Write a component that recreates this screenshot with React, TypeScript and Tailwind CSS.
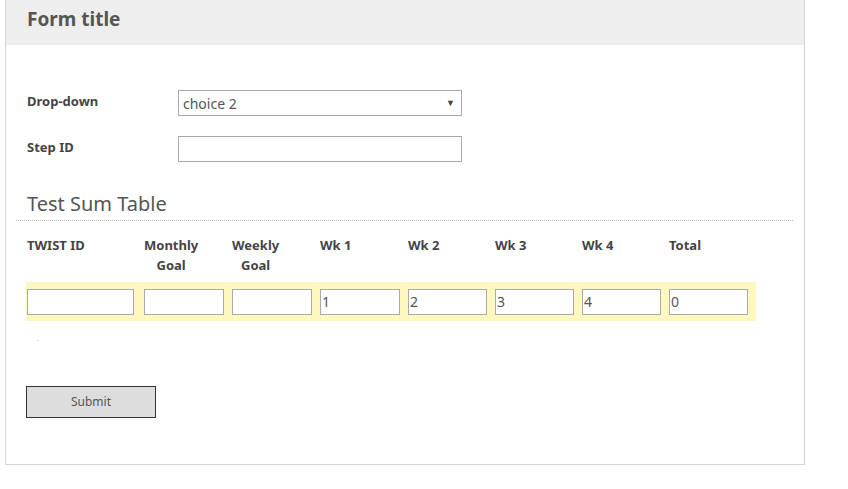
export default function App() {
  const cols = [
    { h: ["TWIST ID"], w: "w-[117px]", iw: "w-[107px]", v: "" },
    { h: ["Monthly", "Goal"], w: "w-[88px]", iw: "w-[80px]", v: "" },
    { h: ["Weekly", "Goal"], w: "w-[88px]", iw: "w-[80px]", v: "" },
    { h: ["Wk 1"], w: "w-[88px]", iw: "w-[80px]", v: "1" },
    { h: ["Wk 2"], w: "w-[87px]", iw: "w-[79px]", v: "2" },
    { h: ["Wk 3"], w: "w-[87px]", iw: "w-[79px]", v: "3" },
    { h: ["Wk 4"], w: "w-[87px]", iw: "w-[79px]", v: "4" },
    { h: ["Total"], w: "w-[86px]", iw: "w-[79px]", v: "0" },
  ];
  return (
    <div className="w-[848px] h-[489px] bg-white font-['Liberation_Sans',Arial,sans-serif] text-[#555]">
      <div className="ml-[5px] w-[800px] h-[465px] border border-t-0 border-[#d4d4d4] flex flex-col">
        <div className="h-[45px] bg-[#eeeeee] pl-[21px] pt-[5px] text-[19px] font-bold text-[#555]">Form title</div>
        <div className="pl-[21px] pt-[45px] flex items-start">
          <div className="w-[151px] text-[13px] font-bold text-[#444] pt-[2px]">Drop-down</div>
          <div className="w-[284px] h-[26px] border border-[#aaa] flex items-center justify-between px-[4px] text-[14px] text-[#555]">
            <span>choice 2</span>
            <span className="text-[9px] text-[#444] pr-[2px]">▼</span>
          </div>
        </div>
        <div className="pl-[21px] pt-[20px] flex items-start">
          <div className="w-[151px] text-[13px] font-bold text-[#444] pt-[2px]">Step ID</div>
          <div className="w-[284px] h-[26px] border border-[#aaa]" />
        </div>
        <div className="ml-[21px] mt-[30px] text-[20px] text-[#555] leading-[24px]">Test Sum Table</div>
        <div className="ml-[10px] mr-[11px] mt-[4px] border-t border-dotted border-[#bbb]" />
        <div className="ml-[21px] mt-[14px] flex text-[13px] font-bold text-[#444] leading-[20px]">
          {cols.map((c, i) => (
            <div key={i} className={c.w}>
              <div className="inline-flex flex-col items-center">
                {c.h.map((t) => (
                  <span key={t}>{t}</span>
                ))}
              </div>
            </div>
          ))}
        </div>
        <div className="ml-[20px] w-[730px] mt-[7px] h-[39px] bg-[#fff7c0] flex items-center pl-[1px]">
          {cols.map((c, i) => (
            <div key={i} className={c.w}>
              <div className={`${c.iw} h-[26px] bg-white border border-[#aaa] flex items-center px-[1px] text-[14px] text-[#555]`}>{c.v}</div>
            </div>
          ))}
        </div>
        <div className="ml-[31px] mt-[10px] text-[6px] text-[#888] leading-[16px]">.</div>
        <div className="ml-[20px] mt-[39px] w-[130px] h-[32px] bg-[#dddddd] border border-[#333] flex items-center justify-center text-[12px] text-[#555]">Submit</div>
      </div>
    </div>
  );
}
